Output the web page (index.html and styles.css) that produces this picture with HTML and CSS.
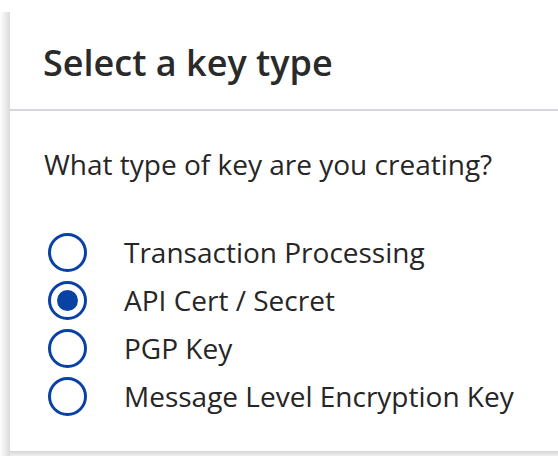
FILE: index.html
```html
<!DOCTYPE html>
<html>
  <head>
    <link rel="stylesheet" href="styles.css">
  </head>
  <body>
    <div class="frame">
      <div class="card">
        <div class="card-header">
          <h2 class="title">Select a key type</h2>
        </div>
        <div class="card-body">
          <p class="question">What type of key are you creating?</p>
          <div class="options">
            <label class="option"><span class="radio"></span>Transaction Processing</label>
            <label class="option"><span class="radio checked"></span>API Cert / Secret</label>
            <label class="option"><span class="radio"></span>PGP Key</label>
            <label class="option"><span class="radio"></span>Message Level Encryption Key</label>
          </div>
        </div>
      </div>
    </div>
  </body>
</html>
```

FILE: styles.css
```css
html {
  overflow: hidden;
}

body {
  margin: 0;
  background-color: #fff;
  font-family: "Open Sans", Arial, sans-serif;
  color: #262626;
}

/* Bayangan di kiri dan bawah kartu */
.frame {
  padding: 16px 0 5px 10px;
  background:
    linear-gradient(90deg, #fff, #dadada) left 12px / 10px calc(100% - 12px) no-repeat,
    linear-gradient(180deg, #d4d4d4, #f0f0f0) left bottom / 100% 5px no-repeat;
}

/* Kartu utama */
.card {
  width: 600px;
  height: 435px;
  background-color: #fff;
}

.card-header {
  height: 93px;
  display: flex;
  align-items: center;
  padding-left: 33px;
  border-bottom: 2px solid #d6d6db;
}

.title {
  margin: 0;
  font-size: 36px;
  font-weight: 600;
  color: #2a2a2a;
}

.card-body {
  padding: 34px 0 0 34px;
}

.question {
  margin: 0 0 45px 0;
  font-size: 28px;
  line-height: 38px;
}

.options {
  display: flex;
  flex-direction: column;
}

.option {
  display: flex;
  align-items: center;
  height: 48px;
  font-size: 28px;
}

/* Tombol radio bulat */
.radio {
  box-sizing: border-box;
  width: 39px;
  height: 39px;
  margin-left: 4px;
  margin-right: 37px;
  border: 3.5px solid #0a42a4;
  border-radius: 50%;
  display: flex;
  align-items: center;
  justify-content: center;
}

.radio.checked::after {
  content: "";
  width: 21px;
  height: 21px;
  border-radius: 50%;
  background-color: #0a42a4;
}
```
